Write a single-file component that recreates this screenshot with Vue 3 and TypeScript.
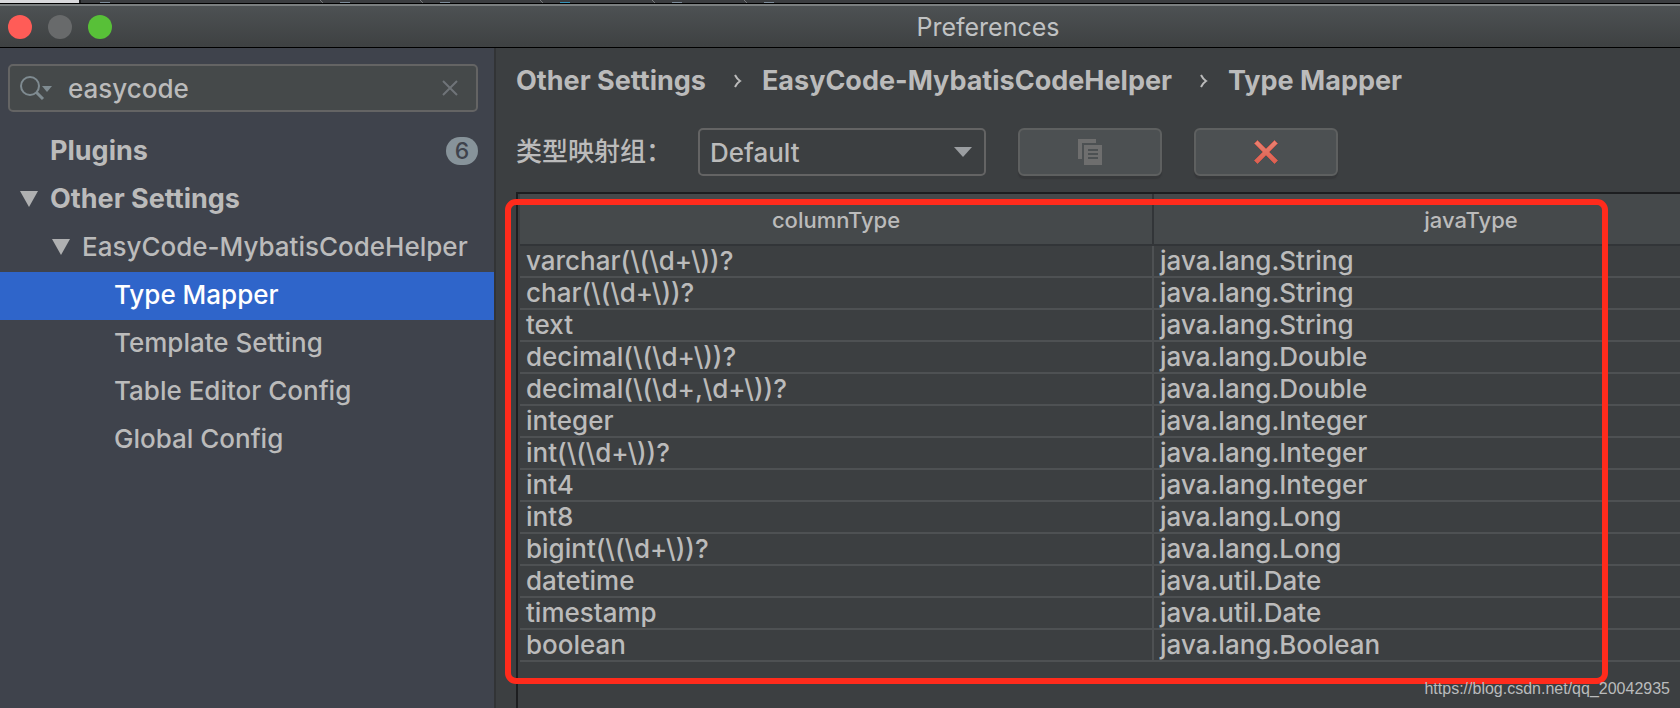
<script setup lang="ts">
import { ref } from 'vue'

interface Mapping {
  column: string
  java: string
}

const query = ref('easycode')
const group = ref('Default')

const children: string[] = ['Type Mapper', 'Template Setting', 'Table Editor Config', 'Global Config']
const selected = ref('Type Mapper')
const crumbs: string[] = ['Other Settings', 'EasyCode-MybatisCodeHelper', 'Type Mapper']

const mappings: Mapping[] = [
  { column: 'varchar(\\(\\d+\\))?', java: 'java.lang.String' },
  { column: 'char(\\(\\d+\\))?', java: 'java.lang.String' },
  { column: 'text', java: 'java.lang.String' },
  { column: 'decimal(\\(\\d+\\))?', java: 'java.lang.Double' },
  { column: 'decimal(\\(\\d+,\\d+\\))?', java: 'java.lang.Double' },
  { column: 'integer', java: 'java.lang.Integer' },
  { column: 'int(\\(\\d+\\))?', java: 'java.lang.Integer' },
  { column: 'int4', java: 'java.lang.Integer' },
  { column: 'int8', java: 'java.lang.Long' },
  { column: 'bigint(\\(\\d+\\))?', java: 'java.lang.Long' },
  { column: 'datetime', java: 'java.util.Date' },
  { column: 'timestamp', java: 'java.util.Date' },
  { column: 'boolean', java: 'java.lang.Boolean' },
]
</script>

<template>
  <div class="window">
    <div class="backdrop">
      <svg width="800" height="3" viewBox="0 0 800 3" aria-hidden="true">
        <rect width="79" height="3" fill="#d9d9dc" />
        <rect x="79" width="2" height="3" fill="#1d1e1f" />
        <g fill="#7d8b99">
          <rect x="100" y="2" width="10" height="1" />
          <rect x="340" y="2" width="10" height="1" />
          <rect x="440" y="2" width="10" height="1" />
          <rect x="672" y="2" width="10" height="1" />
          <rect x="764" y="2" width="10" height="1" />
        </g>
        <rect x="560" y="2" width="10" height="1" fill="#3592b8" />
        <path d="M320 0l3 3M420 0l3 3M540 0l3 3M652 0l3 3M744 0l3 3" stroke="#77797b" />
      </svg>
    </div>
    <header class="titlebar">
      <div class="lights">
        <button class="light close" aria-label="Close"></button>
        <button class="light minimize" aria-label="Minimize" disabled></button>
        <button class="light zoom" aria-label="Zoom"></button>
      </div>
      <h1>Preferences</h1>
    </header>

    <div class="body">
      <aside class="sidebar">
        <div class="search">
          <svg width="34" height="26" viewBox="0 0 34 26" aria-hidden="true">
            <circle cx="10" cy="11" r="9" fill="none" stroke="#7f8b91" stroke-width="2" />
            <path d="M16 17l7 7" stroke="#7f8b91" stroke-width="3" />
            <path d="M22 11h10l-5 6z" fill="#7f8b91" />
          </svg>
          <input v-model="query" type="text" aria-label="Search settings" spellcheck="false" />
          <button class="clear" aria-label="Clear search" @click="query = ''">
            <svg width="16" height="16" viewBox="0 0 16 16"><path d="M1 1l14 14M15 1L1 15" stroke="#6f7478" stroke-width="2" /></svg>
          </button>
        </div>
        <nav class="tree">
          <a href="#plugins" class="node level0 strong">
            <span>Plugins</span>
            <span class="count">6</span>
          </a>
          <a href="#other" class="node level0 strong">
            <svg class="arrow" width="18" height="16" viewBox="0 0 18 16"><path d="M0 0h18l-9 16z" fill="#afb0b1" /></svg>
            <span>Other Settings</span>
          </a>
          <a href="#easycode" class="node level1">
            <svg class="arrow" width="18" height="16" viewBox="0 0 18 16"><path d="M0 0h18l-9 16z" fill="#afb0b1" /></svg>
            <span>EasyCode-MybatisCodeHelper</span>
          </a>
          <a
            v-for="item in children"
            :key="item"
            href="#page"
            class="node level2"
            :class="{ selected: item === selected }"
            @click.prevent="selected = item"
          >
            <span>{{ item }}</span>
          </a>
        </nav>
      </aside>

      <main class="content">
        <div class="crumbs">
          <template v-for="(crumb, index) in crumbs" :key="crumb">
            <svg v-if="index > 0" class="chevron" width="8" height="14" viewBox="0 0 8 14" aria-hidden="true">
              <path d="M1 1q2 4 5 6q-3 2-5 6" fill="none" stroke="#bbbbbb" stroke-width="2" />
            </svg>
            <span>{{ crumb }}</span>
          </template>
        </div>

        <div class="toolbar">
          <label for="group">类型映射组：</label>
          <div class="select">
            <select id="group" v-model="group">
              <option>Default</option>
            </select>
            <svg width="18" height="10" viewBox="0 0 18 10" aria-hidden="true"><path d="M0 0h18l-9 10z" fill="#9b9ea1" /></svg>
          </div>
          <button class="action" aria-label="Copy group" disabled>
            <svg width="24" height="26" viewBox="0 0 24 26">
              <path d="M0 0h18v4H4v16H0z" fill="#6e6e6e" />
              <path d="M6 6h18v20H6zM10 10v2h10v-2zM10 14v2h10v-2zM10 18v2h10v-2z" fill="#6e6e6e" fill-rule="evenodd" />
            </svg>
          </button>
          <button class="action" aria-label="Delete group">
            <svg width="24" height="24" viewBox="0 0 24 24">
              <defs>
                <linearGradient id="cross" x1="0" y1="0" x2="0" y2="1">
                  <stop offset="0" stop-color="#e88373" />
                  <stop offset="1" stop-color="#dc5f50" />
                </linearGradient>
              </defs>
              <path
                d="M3.500 0.500L12 9L20.500 0.500L23.500 3.500L15 12L23.500 20.500L20.500 23.500L12 15L3.500 23.500L0.500 20.500L9 12L0.500 3.500Z"
                fill="url(#cross)"
                stroke="#d2594b"
              />
            </svg>
          </button>
        </div>

        <div class="table-area">
          <div class="viewport">
            <table>
              <thead>
                <tr>
                  <th scope="col">columnType</th>
                  <th scope="col">javaType</th>
                </tr>
              </thead>
              <tbody>
                <tr v-for="row in mappings" :key="row.column">
                  <td>{{ row.column }}</td>
                  <td>{{ row.java }}</td>
                </tr>
              </tbody>
            </table>
          </div>
          <div class="highlight"></div>
        </div>
      </main>
    </div>
    <div class="watermark">https://blog.csdn.net/qq_20042935</div>
  </div>
</template>

<style>
body {
  margin: 0;
  background: #3c3f41;
}
</style>

<style scoped>
.window {
  position: relative;
  display: flex;
  flex-direction: column;
  min-height: 100vh;
  overflow: hidden;
  background: #3c3f41;
  color: #bbbbbb;
  font-family: Inter, "Liberation Sans", "Noto Sans CJK SC", sans-serif;
  font-size: 26px;
  font-weight: 500;
  line-height: 32px;
}
* {
  box-sizing: border-box;
}
button,
input,
select {
  margin: 0;
  padding: 0;
  border: 0;
  background: none;
  color: inherit;
  font: inherit;
  outline: none;
}
svg {
  display: block;
  flex: none;
}
.backdrop {
  height: 4px;
  overflow: hidden;
  background: #3b3d40;
  border-bottom: 1px solid #000;
}
/* The window runs on past the right edge of the viewport. */
.titlebar {
  display: grid;
  grid-template-columns: 1fr auto 1fr;
  align-items: center;
  width: calc(100% + 296px);
  height: 44px;
  padding: 0 8px;
  border-top: 2px solid #7b7f80;
  border-bottom: 1px solid #000;
  background: linear-gradient(#4d5153, #3e4142);
  color: #c0c2c3;
}
h1 {
  grid-column: 2;
  margin: 0;
  font-size: 25px;
  font-weight: 400;
}
.lights {
  display: flex;
  gap: 16px;
}
.light {
  width: 24px;
  height: 24px;
  border-radius: 50%;
}
.close {
  background: #ff5c57;
}
.minimize {
  background: #686a6b;
}
.zoom {
  background: #58c038;
}
.body {
  display: flex;
  flex: 1;
}
.sidebar {
  flex: none;
  width: 496px;
  padding-top: 16px;
  border-right: 2px solid #323436;
  background: #3f434c;
}
.search {
  display: flex;
  align-items: center;
  height: 48px;
  margin: 0 16px 16px 8px;
  padding: 0 18px 0 10px;
  border: 2px solid #646464;
  border-radius: 5px;
  background: #45494a;
}
.search input {
  flex: 1;
  min-width: 0;
  height: 32px;
  padding: 2px 0 0 14px;
}
.node {
  display: flex;
  align-items: center;
  height: 48px;
  padding: 0 16px 2px 0;
  color: inherit;
  text-decoration: none;
  white-space: nowrap;
}
.strong {
  font-size: 27px;
  font-weight: 700;
}
.level0 {
  padding-left: 50px;
}
.level1 {
  padding-left: 82px;
}
.level2 {
  padding-left: 114px;
}
.arrow {
  margin: 0 12px 0 -30px;
}
.selected {
  background: #2f65ca;
  color: #fff;
}
.count {
  width: 32px;
  height: 28px;
  margin-left: auto;
  border-radius: 14px;
  background: #87939a;
  color: #3f434c;
  font-size: 23px;
  font-weight: 500;
  line-height: 28px;
  text-align: center;
}
.content {
  display: flex;
  flex: 1;
  flex-direction: column;
  min-width: 0;
  padding: 16px 0 0 20px;
}
.crumbs {
  display: flex;
  align-items: center;
  height: 34px;
  font-size: 27px;
  font-weight: 700;
  white-space: nowrap;
}
.chevron {
  margin: 0 20px 0 28px;
}
.toolbar {
  display: flex;
  align-items: center;
  height: 48px;
  margin: 30px 0 16px;
}
.toolbar label {
  width: 182px;
  white-space: nowrap;
}
.select {
  display: grid;
  align-items: center;
  width: 288px;
  height: 48px;
  margin-right: 32px;
  border: 2px solid #646464;
  border-radius: 5px;
}
.select > * {
  grid-area: 1 / 1;
}
.select select {
  width: 100%;
  height: 44px;
  padding: 2px 0 0 10px;
  appearance: none;
}
.select svg {
  justify-self: end;
  margin-right: 12px;
  pointer-events: none;
}
.action {
  display: flex;
  align-items: center;
  justify-content: center;
  width: 144px;
  height: 48px;
  margin-right: 32px;
  border: 2px solid #5e6060;
  border-radius: 6px;
  background: #4c5052;
  box-shadow: 0 3px 1px #36383a;
}
.table-area {
  position: relative;
  flex: 1;
}
.viewport {
  height: 100%;
  padding-left: 2px;
  overflow: hidden;
  border-top: 2px solid #1d1e20;
  border-left: 2px solid #1d1e20;
}
table {
  width: calc(100% + 108px);
  border-collapse: separate;
  border-spacing: 0;
  table-layout: fixed;
}
th {
  height: 52px;
  padding: 2px 0 0;
  border-bottom: 2px solid #323538;
  background: #45494b;
  font-size: 22px;
  font-weight: 500;
  line-height: 28px;
}
td {
  height: 32px;
  padding: 0 0 0 6px;
  border-bottom: 2px solid #4e5153;
  line-height: 30px;
  white-space: nowrap;
}
th:first-child {
  border-right: 2px solid #323538;
}
td:first-child {
  border-right: 2px solid #4e5153;
}
.highlight {
  position: absolute;
  top: 7px;
  right: 72px;
  bottom: 24px;
  left: -11px;
  border: 6px solid #ff2b1c;
  border-radius: 11px;
  pointer-events: none;
}
.watermark {
  position: absolute;
  right: 10px;
  bottom: 8px;
  color: #b9bbbc;
  font-family: "Liberation Sans", sans-serif;
  font-size: 16px;
  font-weight: 400;
  line-height: 22px;
}
</style>
